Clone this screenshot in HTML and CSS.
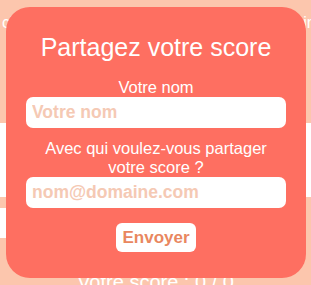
FILE: index.html
```html
<!DOCTYPE html>
<html lang="fr">
<head>
    <meta charset="UTF-8">
    <meta name="viewport" content="width=device-width, initial-scale=1.0">
    <title>Quiz - Partagez votre score</title>
    <link rel="stylesheet" href="styles.css">
</head>
<body>

    <div class="page">
        <div class="top-bar">
            <span>classement</span>
            <span class="top-right">infos</span>
        </div>
        <div class="question-band"></div>
        <div class="answer-box"></div>
        <p class="score">Votre score : 0 / 0</p>
    </div>

    <div class="modal">
        <h2>Partagez votre score</h2>
        <label for="nom">Votre nom</label>
        <input type="text" id="nom" placeholder="Votre nom">
        <label for="email" class="second-label">Avec qui voulez-vous partager votre score ?</label>
        <input type="text" id="email" placeholder="nom@domaine.com">
        <button class="send-button">Envoyer</button>
    </div>

</body>
</html>
```

FILE: styles.css
```css
* {
    box-sizing: border-box;
    margin: 0;
    padding: 0;
}
body {
    font-family: "Liberation Sans", Arial, sans-serif;
    background-color: #fcc6ad;
    color: #fff;
    overflow: hidden;
}
.page {
    height: 285px;
}
.top-bar {
    display: flex;
    justify-content: space-between;
    padding: 14px 0 0 2px;
    height: 123px;
    font-size: 16px;
    white-space: nowrap;
}
.top-right {
    margin-right: -26px;
}
.question-band {
    height: 74px;
    background-color: #fff;
}
.answer-box {
    width: 150px;
    height: 30px;
    margin-top: 11px;
    background-color: #fff;
}
.score {
    text-align: center;
    font-size: 20px;
    margin-top: 33px;
}
.modal {
    position: absolute;
    top: 7px;
    left: 6px;
    width: 300px;
    height: 271px;
    padding: 26px 20px 0;
    background-color: #fe6f61;
    border-radius: 24px;
    display: flex;
    flex-direction: column;
    align-items: center;
    text-align: center;
}
h2 {
    font-size: 25px;
    font-weight: normal;
    margin-bottom: 16px;
}
label {
    display: block;
    font-size: 16.5px;
}
.second-label {
    margin-top: 11px;
    line-height: 19px;
}
input[type="text"] {
    width: 100%;
    height: 31px;
    border: none;
    border-radius: 7px;
    padding: 0 6px;
    font-family: inherit;
    font-size: 17.5px;
    font-weight: bold;
    color: #e98a62;
    background-color: #fff;
}
input::placeholder {
    color: #f5c9b4;
}
.send-button {
    margin-top: 15px;
    height: 29px;
    padding: 0 6px;
    border: none;
    border-radius: 6px;
    background-color: #fff;
    color: #e9875f;
    font-family: inherit;
    font-size: 17px;
    font-weight: bold;
    cursor: pointer;
}
```
